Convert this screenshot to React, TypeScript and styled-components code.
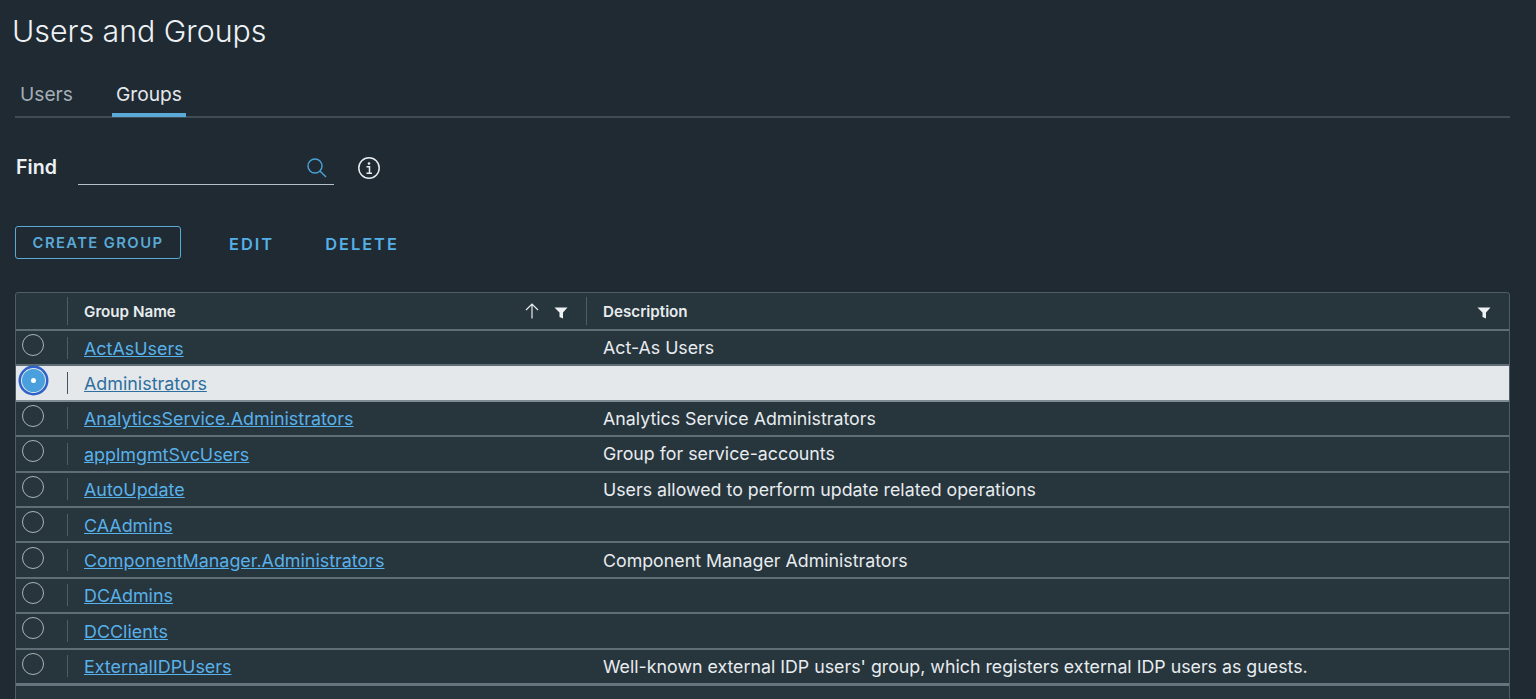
import styled, { createGlobalStyle } from 'styled-components';

const GlobalStyle = createGlobalStyle`
  html, body {
    margin: 0;
    padding: 0;
    height: 100%;
    overflow: hidden;
    background: #1f2a33;
  }
  body {
    font-family: Inter, "Open Sans", "Liberation Sans", sans-serif;
  }
`;

const groups = [
  { name: 'ActAsUsers', description: 'Act-As Users' },
  { name: 'Administrators', description: '', selected: true },
  { name: 'AnalyticsService.Administrators', description: 'Analytics Service Administrators' },
  { name: 'applmgmtSvcUsers', description: 'Group for service-accounts' },
  { name: 'AutoUpdate', description: 'Users allowed to perform update related operations' },
  { name: 'CAAdmins', description: '' },
  { name: 'ComponentManager.Administrators', description: 'Component Manager Administrators' },
  { name: 'DCAdmins', description: '' },
  { name: 'DCClients', description: '' },
  {
    name: 'ExternalIDPUsers',
    description: "Well-known external IDP users' group, which registers external IDP users as guests.",
  },
];

function FilterIcon() {
  return (
    <FilterSvg width="14" height="12" viewBox="0 0 14 12">
      <path d="M0.5 0.5h13L9 5.5V11.5L5.5 10V5.5Z" fill="#eef1f3" />
    </FilterSvg>
  );
}

function App() {
  return (
    <Page>
      <GlobalStyle />
      <Title>Users and Groups</Title>
      <Tabs>
        <Tab>Users</Tab>
        <Tab $active>Groups</Tab>
      </Tabs>
      <FindRow>
        <FindLabel>Find</FindLabel>
        <FindBox>
          <svg width="22" height="22" viewBox="0 0 22 22" fill="none" stroke="#4aa3d8" strokeWidth="1.4">
            <circle cx="9" cy="9" r="7" />
            <path d="M14.2 14.2L20 20" />
          </svg>
        </FindBox>
        <svg width="24" height="24" viewBox="0 0 24 24" fill="none" stroke="#e8ecef">
          <circle cx="12" cy="12" r="10.2" strokeWidth="1.5" />
          <circle cx="12" cy="7.5" r="1.3" fill="#e8ecef" stroke="none" />
          <path d="M9.5 10.8H12.5V17M9.5 17.2H15" strokeWidth="1.5" />
        </svg>
      </FindRow>
      <Actions>
        <OutlineButton>CREATE GROUP</OutlineButton>
        <FlatButton>EDIT</FlatButton>
        <FlatButton>DELETE</FlatButton>
      </Actions>
      <Table>
        <HeadRow>
          <SelectCell />
          <NameHead>
            <HeadLabel>Group Name</HeadLabel>
            <HeadIcons>
              <svg width="14" height="16" viewBox="0 0 14 16" fill="none" stroke="#e8ecef" strokeWidth="1.2">
                <path d="M7 15.5V1M1 7L7 1L13 7" />
              </svg>
              <FilterIcon />
            </HeadIcons>
          </NameHead>
          <DescriptionHead>
            <HeadLabel>Description</HeadLabel>
            <FilterIcon />
          </DescriptionHead>
        </HeadRow>
        {groups.map((group) => (
          <Row key={group.name} $selected={group.selected}>
            <SelectCell>
              <Radio $selected={group.selected} />
            </SelectCell>
            <NameCell $selected={group.selected}>
              <GroupLink href="#" $selected={group.selected}>
                {group.name}
              </GroupLink>
            </NameCell>
            <DescriptionCell>{group.description}</DescriptionCell>
          </Row>
        ))}
        <TableFooter />
      </Table>
    </Page>
  );
}

const Page = styled.div`
  height: 699px;
  padding: 0 26px 0 15px;
  overflow: hidden;
  background: #1f2a33;
`;

const Title = styled.h1`
  margin: 0 0 0 -3px;
  padding-top: 13px;
  height: 36px;
  font-size: 30.3px;
  line-height: 36px;
  font-weight: 300;
  color: #eef1f3;
`;

const Tabs = styled.div`
  display: flex;
  gap: 35px;
  margin-top: 22px;
  height: 47px;
  padding-left: 1px;
  border-bottom: 2px solid #3f4c56;
  box-sizing: border-box;
`;

const Tab = styled.div<{ $active?: boolean }>`
  padding: 0 4px;
  height: 46px;
  box-sizing: border-box;
  font-size: 19.2px;
  line-height: 46px;
  color: ${(p) => (p.$active ? '#e4e8eb' : '#a3aeb5')};
  border-bottom: ${(p) => (p.$active ? '4px solid #5aa9d6' : 'none')};
`;

const FindRow = styled.div`
  display: flex;
  align-items: center;
  margin-top: 32px;
  height: 36px;
  padding-left: 1px;
`;

const FindLabel = styled.label`
  width: 62px;
  margin-top: -2px;
  font-size: 19.6px;
  font-weight: 600;
  color: #eef1f3;
`;

const FindBox = styled.div`
  display: flex;
  justify-content: flex-end;
  align-items: center;
  width: 256px;
  height: 34px;
  margin-right: 23px;
  padding-right: 6px;
  box-sizing: border-box;
  border-bottom: 1px solid #b8c0c6;
`;

const Actions = styled.div`
  display: flex;
  align-items: center;
  gap: 45px;
  margin-top: 39px;
  height: 34px;
`;

const OutlineButton = styled.button`
  height: 33px;
  width: 166px;
  padding: 2px 0 0;
  background: transparent;
  border: 1.5px solid #5aa9d6;
  border-radius: 3px;
  font: 600 14.8px Inter, sans-serif;
  letter-spacing: 1.4px;
  color: #5aa9d6;
`;

const FlatButton = styled.button`
  padding: 4px 3px 0;
  background: transparent;
  border: none;
  font: 600 16.4px Inter, sans-serif;
  letter-spacing: 2px;
  color: #56b0e8;
`;

const Table = styled.div`
  margin-top: 33px;
  width: 1495px;
  box-sizing: border-box;
  border: 1px solid #4f5d67;
  border-radius: 3px 3px 0 0;
  background: #27353d;
`;

const HeadRow = styled.div`
  display: flex;
  align-items: center;
  height: 36px;
  border-bottom: 2px solid #5f6d76;
`;

const Row = styled.div<{ $selected?: boolean }>`
  display: flex;
  align-items: center;
  height: 33.4px;
  border-bottom: 2px solid ${(p) => (p.$selected ? '#7f8b93' : '#5f6d76')};
  background: ${(p) => (p.$selected ? '#e4e8eb' : 'transparent')};
  &:nth-last-child(2) {
    border-bottom: 3px solid #66747d;
  }
`;

const SelectCell = styled.div`
  flex: none;
  display: flex;
  justify-content: center;
  width: 34px;
  margin-right: 17px;
`;

const Radio = styled.span<{ $selected?: boolean }>`
  display: block;
  box-sizing: border-box;
  width: 22px;
  height: 22px;
  margin-top: -5px;
  border-radius: 50%;
  border: 1.5px solid #a9b3b9;
  ${(p) =>
    p.$selected &&
    `
    width: 23px;
    height: 23px;
    border: 9px solid #4aa0dc;
    background: #ffffff;
    box-shadow: 0 0 0 1px #e4e8eb, 0 0 0 3.5px #2f62c8;
  `}
`;

const NameHead = styled.div`
  flex: none;
  display: flex;
  align-items: center;
  justify-content: space-between;
  width: 520px;
  height: 28px;
  padding: 0 18px 0 16px;
  box-sizing: border-box;
  border-left: 1px solid #4f5d67;
  border-right: 1px solid #4f5d67;
`;

const HeadIcons = styled.div`
  display: flex;
  align-items: center;
  gap: 15px;
`;

const DescriptionHead = styled.div`
  flex: 1;
  display: flex;
  align-items: center;
  justify-content: space-between;
  padding: 0 18px 0 16px;
`;

const HeadLabel = styled.span`
  font-size: 15.2px;
  font-weight: 600;
  color: #e8ecef;
`;

const FilterSvg = styled.svg`
  margin-top: 4px;
`;

const NameCell = styled.div<{ $selected?: boolean }>`
  flex: none;
  width: 520px;
  height: 22px;
  line-height: 24px;
  padding-left: 16px;
  box-sizing: border-box;
  border-left: 1px solid ${(p) => (p.$selected ? '#46545e' : '#4f5d67')};
`;

const GroupLink = styled.a<{ $selected?: boolean }>`
  font-size: 17.9px;
  color: ${(p) => (p.$selected ? '#2f6f9e' : '#58b1ea')};
`;

const DescriptionCell = styled.div`
  padding-left: 16px;
  font-size: 17.8px;
  color: #e8ecef;
`;

const TableFooter = styled.div`
  height: 30px;
`;

export default App;
